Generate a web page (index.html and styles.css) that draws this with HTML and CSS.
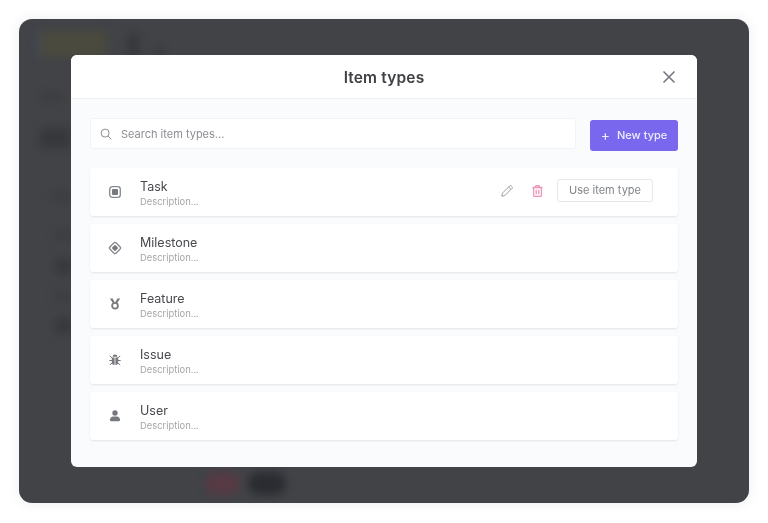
FILE: index.html
```html
<!DOCTYPE html>
<html lang="en">
<head>
<meta charset="utf-8">
<title>Item types</title>
<link rel="stylesheet" href="styles.css">
</head>
<body>
<div class="window">
  <div class="backdrop" aria-hidden="true">
    <div class="bg-top">
      <span class="bg-logo"></span>
      <span class="bg-figure"></span>
      <span class="bg-dot"></span>
    </div>
    <span class="bg-line bg-line-a"></span>
    <span class="bg-block bg-block-a"></span>
    <span class="bg-line bg-line-b"></span>
    <span class="bg-line bg-line-c"></span>
    <span class="bg-block bg-block-b"></span>
    <span class="bg-line bg-line-d"></span>
    <span class="bg-block bg-block-c"></span>
    <div class="bg-pills">
      <span class="bg-pill bg-pill-red"></span>
      <span class="bg-pill bg-pill-dark"></span>
    </div>
  </div>

  <section class="modal">
    <header class="modal-head">
      <h1 class="modal-title">Item types</h1>
      <button class="close" aria-label="Close">
        <svg viewBox="0 0 14 14" width="14" height="14"><path d="M1.500 1.500l11 11M12.500 1.500l-11 11"/></svg>
      </button>
    </header>
    <div class="modal-body">
      <div class="toolbar">
        <label class="search">
          <svg class="search-icon" viewBox="0 0 12 12" width="12" height="12"><circle cx="5.100" cy="5.100" r="4"/><path d="M8.100 8.100l3.200 3.200"/></svg>
          <span class="search-text">Search item types...</span>
        </label>
        <button class="new-type"><span class="plus">+</span>New type</button>
      </div>
      <ul class="list">
        <li class="row">
          <span class="row-icon">
            <svg viewBox="0 0 12 12" width="12" height="12"><rect x=".7" y=".7" width="10.600" height="10.600" rx="2.600" class="ln"/><rect x="3" y="3" width="6" height="6" rx="1" class="fl"/></svg>
          </span>
          <div class="row-text"><div class="row-name">Task</div><div class="row-desc">Description...</div></div>
          <div class="row-actions">
            <svg class="act-edit" viewBox="0 0 12 12" width="12" height="12"><path d="M.8 11.200l.6-3L8.600 1a1.200 1.200 0 0 1 1.700 0l.7.7a1.200 1.200 0 0 1 0 1.700L3.800 10.600zM7.600 2l2.400 2.400"/></svg>
            <svg class="act-trash" viewBox="0 0 11 12" width="11" height="12"><path d="M.5 2.500h10M3.700 2.500V1.200q0-.6.6-.6h2.400q.6 0 .6.6v1.300M1.600 2.500v7.900q0 1 1 1h5.800q1 0 1-1V2.500M4.200 4.800v4.400M6.800 4.800v4.400"/></svg>
            <button class="use">Use item type</button>
          </div>
        </li>
        <li class="row">
          <span class="row-icon">
            <svg viewBox="0 0 14 14" width="14" height="14"><rect x="2.600" y="2.600" width="8.800" height="8.800" rx="1.800" transform="rotate(45 7 7)" class="ln"/><rect x="4.600" y="4.600" width="4.800" height="4.800" rx=".8" transform="rotate(45 7 7)" class="fl"/></svg>
          </span>
          <div class="row-text"><div class="row-name">Milestone</div><div class="row-desc">Description...</div></div>
        </li>
        <li class="row">
          <span class="row-icon">
            <svg viewBox="0 0 12 12" width="12" height="12"><circle cx="6" cy="7.800" r="2.900" class="ring"/><path class="fl" d="M.8.600h2.800L5.600 4 4 5.200.8.600zM11.200.600H8.400L6.400 4 8 5.200l3.200-4.600z"/></svg>
          </span>
          <div class="row-text"><div class="row-name">Feature</div><div class="row-desc">Description...</div></div>
        </li>
        <li class="row">
          <span class="row-icon">
            <svg viewBox="0 0 12 12" width="12" height="12"><path class="fl" d="M3.600 2.800a2.400 2.400 0 0 1 4.800 0zM3 3.500h2.600v7.600A3 3 0 0 1 2.800 8V3.700zM6.400 3.500H9l.2.200V8a3 3 0 0 1-2.800 3.100z"/><path class="ln-thin" d="M.8 1.800l2.400 2.200M11.200 1.800L8.800 4M.3 6.500h2.800M11.700 6.500H8.900M.8 11l2.400-2.200M11.200 11L8.800 8.800"/></svg>
          </span>
          <div class="row-text"><div class="row-name">Issue</div><div class="row-desc">Description...</div></div>
        </li>
        <li class="row">
          <span class="row-icon">
            <svg viewBox="0 0 12 12" width="12" height="12"><circle cx="6" cy="3" r="2.700" class="fl"/><path class="fl" d="M1 10c0-2.400 1.600-3.600 3-3.600h4c1.400 0 3 1.200 3 3.600 0 .8-.5 1.200-1.200 1.200H2.200C1.500 11.200 1 10.800 1 10z"/></svg>
          </span>
          <div class="row-text"><div class="row-name">User</div><div class="row-desc">Description...</div></div>
        </li>
      </ul>
    </div>
  </section>
</div>
</body>
</html>
```

FILE: styles.css
```css
* { box-sizing: border-box; }
html, body { margin: 0; height: 100%; }
body {
  background: #fff;
  font-family: Inter, "Noto Sans", "Liberation Sans", sans-serif;
  padding: 19px;
  overflow: hidden;
}
.window {
  position: relative;
  width: 730px;
  height: 484px;
  border-radius: 13px;
  background: #414347;
  box-shadow: 0 0 12px rgba(60, 70, 100, .10);
  overflow: hidden;
}

/* blurred app behind the modal */
.backdrop {
  height: 100%;
  display: flex;
  flex-direction: column;
  padding: 11px 0 8px 21px;
  filter: blur(4px);
}
.bg-top { display: flex; align-items: flex-end; height: 27px; }
.bg-logo { width: 67px; height: 26px; margin-right: 21px; background: #4a4a3e; box-shadow: -4px 0 0 #434a58; }
.bg-figure { width: 11px; height: 24px; margin-right: 16px; border-radius: 5px 5px 1px 1px; background: #36373b; }
.bg-dot { width: 9px; height: 9px; border-radius: 3px; background: #36373b; }
.bg-line { display: block; height: 6px; background: #3a3b3f; }
.bg-block { display: block; height: 15px; background: #37383c; border-radius: 4px; }
.bg-line-a { width: 22px; margin-top: 37px; }
.bg-block-a { width: 30px; height: 20px; margin-top: 28px; }
.bg-line-b { width: 20px; margin: 46px 0 0 12px; }
.bg-line-c { width: 20px; margin: 32px 0 0 15px; }
.bg-block-b { width: 18px; margin: 21px 0 0 15px; }
.bg-line-d { width: 16px; margin: 20px 0 0 15px; }
.bg-block-c { width: 18px; margin: 18px 0 0 15px; }
.bg-pills { display: flex; gap: 8px; margin: auto 0 0 165px; }
.bg-pill { height: 23px; border-radius: 12px; }
.bg-pill-red { width: 35px; background: #573a44; }
.bg-pill-dark { width: 38px; background: #2b2c31; }

/* modal */
.modal {
  position: absolute;
  left: 52px;
  top: 36px;
  width: 626px;
  height: 412px;
  border-radius: 6px;
  background: #fafbfd;
  overflow: hidden;
  display: flex;
  flex-direction: column;
  filter: blur(.35px);
}
.modal-head {
  height: 44px;
  flex: none;
  background: #fff;
  border-bottom: 1px solid #eef0f3;
  display: flex;
  align-items: center;
  justify-content: center;
  position: relative;
}
.modal-title {
  margin: 2px 0 0;
  font-size: 15.500px;
  font-weight: 600;
  letter-spacing: .01em;
  color: #3f4145;
}
.close {
  position: absolute;
  right: 21px;
  top: 15px;
  width: 14px;
  height: 14px;
  padding: 0;
  border: 0;
  background: none;
  display: flex;
}
.close svg { fill: none; stroke: #727579; stroke-width: 1.500; }

.modal-body { padding: 19px 19px 0; }
.toolbar { display: flex; align-items: flex-start; gap: 14px; }
.search {
  flex: 1;
  height: 31px;
  display: flex;
  align-items: center;
  gap: 9px;
  padding-left: 9px;
  background: #fff;
  border: 1px solid #f2f3f6;
  border-radius: 3px;
}
.search-icon { fill: none; stroke: #8d9094; stroke-width: 1; flex: none; }
.search-text { font-size: 11px; color: #8b8e92; }
.new-type {
  width: 88px;
  height: 31px;
  margin-top: 2px;
  padding: 0 0 1px;
  border: 0;
  border-radius: 3px;
  background: #7968ee;
  color: #eeecfd;
  font: 500 11px Inter, "Noto Sans", sans-serif;
  display: flex;
  align-items: center;
  justify-content: center;
  gap: 7px;
}
.plus { font-size: 14px; font-weight: 400; line-height: 1; }

.list {
  list-style: none;
  margin: 17px 0 0;
  padding: 0;
  display: flex;
  flex-direction: column;
  gap: 8px;
}
.row {
  height: 48px;
  display: flex;
  align-items: center;
  background: #fff;
  border-radius: 3px;
  box-shadow: 0 1px 2px rgba(70, 80, 110, .13);
}
.row-icon {
  width: 50px;
  flex: none;
  display: flex;
  justify-content: center;
  padding-right: 1px;
  padding-bottom: 1px;
}
.ln { fill: none; stroke: #85888c; stroke-width: 1.300; }
.fl { fill: #76797d; }
.ring { fill: none; stroke: #76797d; stroke-width: 1.800; }
.ln-thin { fill: none; stroke: #76797d; stroke-width: 1; }
.row-text { flex: 1; padding-top: 2px; }
.row-name { font-size: 12.500px; line-height: 15px; color: #47494d; }
.row-desc { font-size: 9.400px; line-height: 13px; margin-top: 1px; color: #a3a5a9; }
.row-actions {
  display: flex;
  align-items: center;
  padding-right: 25px;
  margin-bottom: 2px;
}
.act-edit { fill: none; stroke: #8f9296; stroke-width: .9; margin-right: 19px; }
.act-trash { fill: none; stroke: #ee94b8; stroke-width: 1.300; margin-right: 14px; }
.use {
  width: 96px;
  height: 23px;
  margin: -2px 0 0;
  padding: 0;
  background: #fff;
  border: 1px solid #e6e8eb;
  border-radius: 3px;
  color: #818488;
  font: 400 11px Inter, "Noto Sans", sans-serif;
}
```
